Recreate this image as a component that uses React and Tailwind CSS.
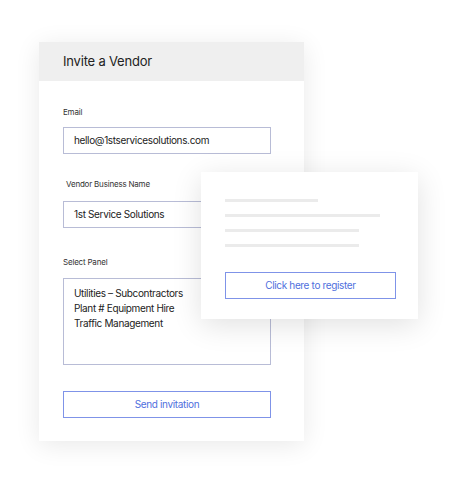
import React from 'react';

const font = { fontFamily: 'Inter, "Noto Sans", sans-serif' };

const Field = ({ label, value, labelClass = '', gap = 'mt-[9px]' }) => (
  <div>
    <p className={`text-[8px] leading-[12px] tracking-[-0.2px] text-[#333] ${labelClass}`}>{label}</p>
    <div className={`${gap} w-[208px] h-[27px] border border-[#b8bcd6] flex items-center px-[10px] text-[10px] tracking-[-0.35px] text-[#222]`}>
      {value}
    </div>
  </div>
);

const App = () => {
  return (
    <div className="relative w-[474px] h-[494px] bg-white" style={font}>
      <div className="ml-[39px] pt-[42px]">
        <div className="w-[265px] bg-white shadow-[0_4px_24px_rgba(0,0,0,0.09)]">
          <div className="h-[39px] bg-[#efefef] flex items-center px-[24px] text-[13px] tracking-[-0.2px] text-[#222]">
            Invite a Vendor
          </div>
          <div className="px-[24px] pt-[25px] pb-[23px]">
            <Field label="Email" value="hello@1stservicesolutions.com" />
            <div className="mt-[24px]">
              <Field label="Vendor Business Name" value="1st Service Solutions" labelClass="ml-[3px]" gap="mt-[11px]" />
            </div>
            <div className="mt-[28px]">
              <p className="text-[8px] leading-[12px] tracking-[-0.2px] text-[#333]">Select Panel</p>
              <div className="mt-[10px] w-[208px] h-[87px] border border-[#b8bcd6] px-[10px] pt-[7px] text-[10px] leading-[15px] tracking-[-0.35px] text-[#222]">
                <p>Utilities – Subcontractors</p>
                <p>Plant # Equipment Hire</p>
                <p>Traffic Management</p>
              </div>
            </div>
            <button className="mt-[26px] w-[208px] h-[27px] border border-[#7f93e8] text-[10px] tracking-[-0.35px] text-[#4f70dd] flex items-center justify-center">
              Send invitation
            </button>
          </div>
        </div>
      </div>

      <div className="absolute left-[201px] top-[172px] w-[217px] h-[147px] bg-white shadow-[0_6px_28px_rgba(0,0,0,0.12)] px-[24px] pt-[27px]">
        <div className="flex flex-col gap-[12px]">
          <div className="h-[3px] w-[93px] bg-[#ebebeb]" />
          <div className="h-[3px] w-[155px] bg-[#ebebeb]" />
          <div className="h-[3px] w-[134px] bg-[#ebebeb]" />
          <div className="h-[3px] w-[134px] bg-[#ebebeb]" />
        </div>
        <button className="mt-[25px] w-[171px] h-[27px] border border-[#7f93e8] text-[10px] tracking-[-0.35px] text-[#4f70dd] flex items-center justify-center">
          Click here to register
        </button>
      </div>
    </div>
  );
};

export default App;
